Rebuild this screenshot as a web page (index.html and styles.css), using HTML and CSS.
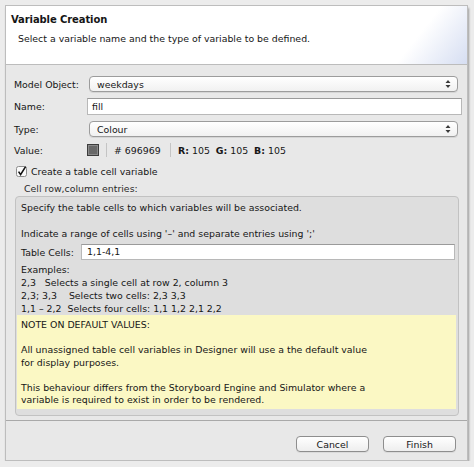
FILE: index.html
```html
<!DOCTYPE html>
<html><head>
    <meta charset="UTF-8">
    <title>Variable Creation</title>
    <link rel="stylesheet" href="styles.css"></head><body>
<div class="dialog">
    <div class="header">
        <h1>Variable Creation</h1>
        <p>Select a variable name and the type of variable to be defined.</p>
    </div>

    <div class="content">
        <div class="form">
            <div class="row">
                <label>Model Object:</label>
                <div class="popup">weekdays
                    <svg class="arrows" width="6" height="10" viewBox="0 0 6 10"><path d="M0.5 4 L3 1 L5.5 4 Z M0.5 6 L3 9 L5.5 6 Z"/></svg>
                </div>
            </div>
            <div class="row row-field">
                <label>Name:</label>
                <div class="field">fill</div>
            </div>
            <div class="row">
                <label>Type:</label>
                <div class="popup">Colour
                    <svg class="arrows" width="6" height="10" viewBox="0 0 6 10"><path d="M0.5 4 L3 1 L5.5 4 Z M0.5 6 L3 9 L5.5 6 Z"/></svg>
                </div>
            </div>
            <div class="row row-value">
                <label>Value:</label>
                <div class="value">
                    <span class="swatch"></span>
                    <span class="sep"></span>
                    <span class="hex"># 696969</span>
                    <span class="sep"></span>
                    <span class="rgb"><b>R:</b> 105 &nbsp;<b>G:</b> 105 &nbsp;<b>B:</b> 105</span>
                </div>
            </div>
        </div>

        <div class="check">
            <svg width="11" height="11" viewBox="0 0 11 11">
                <rect x="0.5" y="0.5" width="10" height="10" rx="2" fill="#fafafa" stroke="#8c8c8c"/>
                <path d="M2.6 5.6 L4.6 8.6 L9.6 0.6" fill="none" stroke="#111" stroke-width="1.6"/>
            </svg>
            <span>Create a table cell variable</span>
        </div>

        <div class="group-title">Cell row,column entries:</div>
        <div class="group">
            <p>Specify the table cells to which variables will be associated.</p>
            <p class="blank"></p>
            <p>Indicate a range of cells using '–' and separate entries using ';'</p>
            <div class="cells-row">
                <label>Table Cells:</label>
                <div class="field">1,1-4,1</div>
            </div>
            <div class="examples">
                <p>Examples:</p>
                <p>2,3 &nbsp; Selects a single cell at row 2, column 3</p>
                <p>2,3; 3,3 &nbsp;&nbsp; Selects two cells: 2,3 3,3</p>
                <p>1,1 – 2,2 &nbsp;Selects four cells: 1,1 1,2 2,1 2,2</p>
            </div>
            <div class="note">
                <p>NOTE ON DEFAULT VALUES:</p>
                <p class="blank"></p>
                <p>All unassigned table cell variables in Designer will use a the default value<br>for display purposes.</p>
                <p class="blank"></p>
                <p>This behaviour differs from the Storyboard Engine and Simulator where a<br>variable is required to exist in order to be rendered.</p>
            </div>
        </div>
    </div>

    <div class="footer">
        <button class="btn">Cancel</button>
        <button class="btn">Finish</button>
    </div>
</div>
</body></html>
```

FILE: styles.css
```css
body {
    margin: 0;
    padding: 0;
    background-color: #ececec;
    font-family: "DejaVu Sans", sans-serif;
    font-size: 9.4px;
    color: #161616;
}
p {
    margin: 0;
}
.dialog {
    margin: 5px 0 0 5px;
    width: 461px;
    border: 1px solid #bdbdbd;
    box-shadow: 1px 3px 2px rgba(0,0,0,0.35);
}
.header {
    height: 51px;
    padding: 7px 0 0 5px;
    background: linear-gradient(128deg, #ffffff 86%, #d6def2 100%);
    border-bottom: 1px solid #bcbcbc;
}
h1 {
    margin: 0;
    font-size: 10px;
    line-height: 13px;
    font-weight: bold;
    letter-spacing: -0.1px;
}
.header p {
    margin: 6px 0 0 7px;
    line-height: 13px;
}
.content {
    background-color: #e8e8e8;
    height: 344px;
    padding-top: 11px;
    border-bottom: 1px solid #a9a9a9;
}
.form {
    display: flex;
    flex-direction: column;
    gap: 6px;
    padding: 0 5px 0 8px;
}
.row {
    display: flex;
    align-items: center;
    height: 16px;
}
.row label {
    width: 73px;
    flex-shrink: 0;
}
.row-field {
    height: 17px;
}
.row-value {
    height: 14px;
}
.popup {
    flex: 1;
    height: 14px;
    margin: 0 4px 0 2px;
    padding-left: 7px;
    display: flex;
    align-items: center;
    justify-content: space-between;
    border: 1px solid #9c9c9c;
    border-radius: 4px;
    background: linear-gradient(#ffffff, #f1f1f1);
    box-shadow: 0 1px 0 rgba(0,0,0,0.08);
}
.arrows {
    margin-right: 6px;
    fill: #3a3a3a;
}
.field {
    flex: 1;
    height: 15px;
    line-height: 15px;
    padding-left: 4px;
    background-color: #fff;
    border: 1px solid #b8b8b8;
    border-top-color: #9a9a9a;
}
.value {
    display: flex;
    align-items: center;
}
.swatch {
    width: 10px;
    height: 10px;
    background-color: #696969;
    border: 1px solid #3c3c3c;
    box-shadow: inset 0 0 0 1px #8a8a8a;
}
.sep {
    width: 1px;
    height: 14px;
    margin: 0 7px;
    background-color: #c4c4c4;
}
.hex {
    width: 49px;
}
.check {
    display: flex;
    align-items: center;
    gap: 4px;
    height: 14px;
    margin: 7px 0 0 10px;
}
.group-title {
    height: 12px;
    line-height: 12px;
    margin: 5px 0 0 18px;
    color: #2a2a2a;
}
.group {
    margin: 1px 8px 0 9px;
    padding: 4px 3px 6px 5px;
    background-color: #dedede;
    border: 1px solid #c2c2c2;
    border-radius: 4px;
    line-height: 13px;
}
.blank {
    height: 13px;
}
.cells-row {
    display: flex;
    align-items: center;
    height: 16px;
    margin-top: 4px;
}
.cells-row label {
    width: 60px;
}
.cells-row .field {
    height: 14px;
    line-height: 14px;
    padding-left: 5px;
}
.examples {
    margin-top: 3px;
}
.note {
    margin: 0 -1px 0 -4px;
    padding: 4px 0 2px 4px;
    background-color: #fbf8c4;
    line-height: 12.5px;
}
.note .blank {
    height: 12.5px;
}
.footer {
    height: 39px;
    display: flex;
    justify-content: flex-end;
    align-items: flex-start;
    gap: 14px;
    padding-right: 11px;
    box-sizing: border-box;
    padding-top: 15px;
    background-color: #e8e8e8;
}
.btn {
    width: 73px;
    height: 16px;
    padding: 0;
    font-family: "DejaVu Sans", sans-serif;
    font-size: 9.4px;
    color: #161616;
    border: 1px solid #8e8e8e;
    border-radius: 4px;
    background: linear-gradient(#ffffff, #eeeeee);
    box-shadow: 0 1px 0 rgba(0,0,0,0.06);
}
```
